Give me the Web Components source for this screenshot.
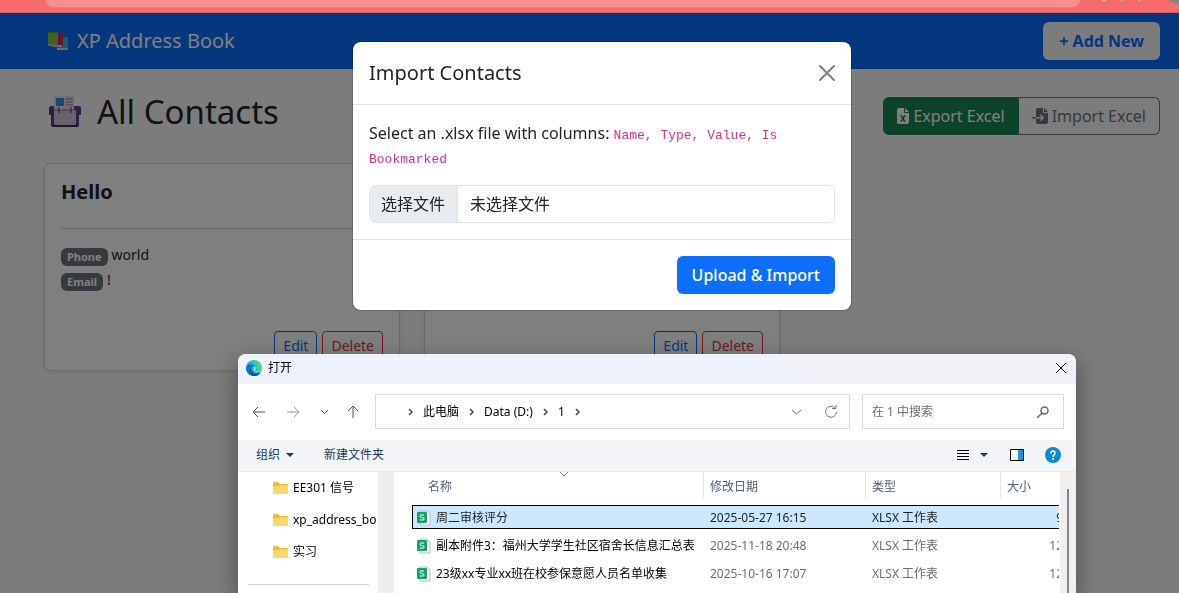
<!DOCTYPE html>
<html lang="en">
<head>
<meta charset="UTF-8">
<meta name="viewport" content="width=device-width, initial-scale=1">
<title>XP Address Book</title>
<style>
    html, body {
        height: 100%;
        margin: 0;
    }

    body {
        background: #f8f9fa;
        color: #212529;
        font: 16px/24px "Noto Sans", "Noto Sans CJK SC", sans-serif;
        overflow: hidden;
    }

    main {
        padding: 24px 19px 24px 44px;
    }

    .cards {
        display: grid;
        grid-template-columns: repeat(3, 1fr);
        gap: 24px;
    }
</style>
</head>
<body>
    <browser-bar></browser-bar>
    <app-navbar>XP Address Book</app-navbar>
    <main>
        <page-header>All Contacts</page-header>
        <div class="cards">
            <contact-card>
                <span slot="name">Hello</span>
                <contact-field label="Phone">world</contact-field>
                <contact-field label="Email">!</contact-field>
            </contact-card>
            <contact-card></contact-card>
        </div>
    </main>
    <import-modal>
        <span slot="title">Import Contacts</span>
    </import-modal>
    <file-dialog></file-dialog>

<script>
// Attach an open shadow root filled with the given markup
class BaseElement extends HTMLElement {
    constructor() {
        super();
        const template = document.createElement('template');
        template.innerHTML = this.constructor.markup;
        this.attachShadow({ mode: 'open' });
        this.shadowRoot.appendChild(template.content.cloneNode(true));
    }
}

class BrowserBar extends BaseElement {
    static markup = `
        <style>
            :host {
                display: flex;
                box-sizing: border-box;
                height: 13px;
                padding-left: 46px;
                background: #f66c6c;
                border-bottom: 1px solid #d95f62;
                position: relative;
                z-index: 2;
                overflow: hidden;
            }
            .address {
                flex: 1;
                height: 7px;
                background: #f99090;
                border-bottom: 1px solid #d98080;
                border-radius: 0 0 16px 16px;
            }
            svg { flex: none; }
        </style>
        <div class="address"></div>
        <svg width="99" height="12" viewBox="0 0 99 12">
            <path d="M22 0h4M41 0h2M58 0h2" stroke="#fff"/>
            <circle cx="97" cy="-5" r="9" fill="#8a8580"/>
        </svg>
    `;
}
customElements.define('browser-bar', BrowserBar);

class AppNavbar extends BaseElement {
    static markup = `
        <style>
            :host {
                display: block;
                background: #0d6efd;
            }
            nav {
                display: flex;
                align-items: center;
                justify-content: space-between;
                height: 56px;
                padding: 0 19px 0 47px;
            }
            a {
                display: flex;
                align-items: center;
                gap: 8px;
                color: #fff;
                font-size: 20px;
                text-decoration: none;
            }
            button {
                height: 38px;
                padding: 0 16px;
                border: 0;
                border-radius: 6px;
                background: #f8f9fa;
                color: #0d6efd;
                font: inherit;
                font-weight: 700;
            }
        </style>
        <nav>
            <a href="#">
                <svg width="22" height="20" viewBox="0 0 22 20" aria-hidden="true">
                    <path d="M10 6h11v12H10z" fill="#39b9e3"/>
                    <path d="M10 17h11v2H10z" fill="#c3dfed"/>
                    <path d="M6 3h10v12H6z" fill="#d5294d"/>
                    <path d="M5 14h10v2H5z" fill="#e6c6d3"/>
                    <path d="M1 1h10v13H1z" fill="#80c342"/>
                    <path d="M1 1h10v1H1z" fill="#5f9c30"/>
                    <path d="M1 13h10v2H1z" fill="#9fc98a"/>
                </svg>
                <slot></slot>
            </a>
            <button type="button">+ Add New</button>
        </nav>
    `;
}
customElements.define('app-navbar', AppNavbar);

class PageHeader extends BaseElement {
    static markup = `
        <style>
            :host {
                display: flex;
                align-items: center;
                justify-content: space-between;
                height: 46px;
                margin-bottom: 24px;
            }
            h1 {
                display: flex;
                align-items: center;
                gap: 15px;
                margin: 0 0 8px;
                padding-left: 4px;
                font-size: 33px;
                font-weight: 400;
                line-height: 38px;
            }
            .group { display: flex; }
            button {
                display: flex;
                align-items: center;
                gap: 4px;
                height: 38px;
                padding: 0 13px;
                border: 1px solid #198754;
                border-radius: 6px 0 0 6px;
                background: #198754;
                color: #fff;
                font: inherit;
            }
            button + button {
                border-color: #6c757d;
                border-left: 0;
                border-radius: 0 6px 6px 0;
                background: none;
                color: #6c757d;
            }
        </style>
        <h1>
            <svg width="34" height="34" viewBox="0 0 34 34" aria-hidden="true">
                <path d="M1 13q0-2 2-2h28q2 0 2 2v7h-2v10q0 2-2 2H5q-2 0-2-2V20H1z" fill="#5b418f"/>
                <path d="M6 1h20v14H6z" fill="#e4dcea"/>
                <path d="M8 3h8v8H8z" fill="#3a8fd9"/>
                <path d="M18 4h7M18 7h7M18 10h7" stroke="#a89bad" stroke-width="1.5"/>
                <path d="M6 15h22v14q0 1-1 1H7q-1 0-1-1z" fill="#d3c4db"/>
                <path d="M6 15h22" stroke="#80699c"/>
                <path d="M11 12v6M23 12v6" stroke="#3c2b5c"/>
                <path d="M4 31h26" stroke="#3f2969" stroke-width="2"/>
            </svg>
            <slot></slot>
        </h1>
        <div class="group">
            <button type="button">
                <svg width="12" height="16" viewBox="0 0 384 512" fill="currentColor" aria-hidden="true">
                    <path fill-rule="evenodd" d="M64 0C29 0 0 29 0 64v384c0 35 29 64 64 64h256c35 0 64-29 64-64V160H256c-18 0-32-14-32-32V0zM256 0v128h128zM155 234l37 57 37-57c7-11 22-14 33-7s14 22 7 33l-49 76 49 76c7 11 4 26-7 33s-26 4-33-7l-37-58-37 58c-7 11-22 14-33 7s-14-22-7-33l49-76-49-76c-7-11-4-26 7-33s26-4 33 7z"/>
                </svg>
                Export Excel
            </button>
            <button type="button">
                <svg width="16" height="16" viewBox="0 0 512 512" fill="currentColor" aria-hidden="true">
                    <path fill-rule="evenodd" d="M128 64c0-35 29-64 64-64h160v128c0 18 14 32 32 32h128v288c0 35-29 64-64 64H192c-35 0-64-29-64-64V336h174l-39 39c-9 9-9 25 0 34s25 9 34 0l80-80c9-9 9-25 0-34l-80-80c-9-9-25-9-34 0s-9 25 0 34l39 39H128zM0 312c0-13 11-24 24-24h104v48H24c-13 0-24-11-24-24zM512 128H384V0z"/>
                </svg>
                Import Excel
            </button>
        </div>
    `;
}
customElements.define('page-header', PageHeader);

class ContactField extends BaseElement {
    static markup = `
        <style>
            :host {
                display: flex;
                align-items: center;
                gap: 4px;
                height: 25px;
                font-size: 14px;
            }
            b {
                padding: 0 6px;
                margin-top: 4px;
                border-radius: 6px;
                background: #6c757d;
                color: #fff;
                font-size: 11px;
                line-height: 18px;
            }
        </style>
        <b></b>
        <slot></slot>
    `;

    connectedCallback() {
        this.shadowRoot.querySelector('b').textContent = this.getAttribute('label');
    }
}
customElements.define('contact-field', ContactField);

class ContactCard extends BaseElement {
    static markup = `
        <style>
            :host {
                display: flex;
                flex-direction: column;
                box-sizing: border-box;
                min-height: 208px;
                padding: 16px 16px 8px;
                border: 1px solid #d5d6d7;
                border-radius: 6px;
                background: #fff;
                box-shadow: 0 2px 4px rgba(0, 0, 0, .08);
            }
            h2 {
                min-height: 24px;
                margin: 0;
                font-size: 20px;
                font-weight: 700;
            }
            hr {
                width: 100%;
                margin: 24px 0 13px;
                border: 0;
                border-top: 1px solid #c8c9ca;
            }
            .fields { flex: 1; }
            footer {
                display: flex;
                justify-content: flex-end;
                gap: 5px;
            }
            button {
                height: 31px;
                padding: 0 8px 2px;
                border: 1px solid #0d6efd;
                border-radius: 4px;
                background: none;
                color: #0d6efd;
                font: inherit;
                font-size: 14px;
            }
            .delete {
                border-color: #dc3545;
                color: #dc3545;
            }
        </style>
        <h2><slot name="name"></slot></h2>
        <hr>
        <div class="fields"><slot></slot></div>
        <footer>
            <button type="button">Edit</button>
            <button type="button" class="delete">Delete</button>
        </footer>
    `;
}
customElements.define('contact-card', ContactCard);

class ImportModal extends BaseElement {
    static markup = `
        <style>
            :host {
                display: flex;
                justify-content: center;
                align-items: flex-start;
                box-sizing: border-box;
                position: fixed;
                inset: 13px 0 0;
                padding: 29px 0 0 25px;
                background: rgba(0, 0, 0, .5);
            }
            section {
                box-sizing: border-box;
                width: 498px;
                border-radius: 8px;
                background: #fff;
                box-shadow: 0 0 0 1px rgba(0, 0, 0, .18);
            }
            header {
                display: flex;
                align-items: center;
                justify-content: space-between;
                padding: 16px;
                border-bottom: 1px solid #dee2e6;
            }
            h2 {
                margin: 0;
                font-size: 20px;
                font-weight: 400;
                line-height: 30px;
            }
            .close {
                display: flex;
                padding: 0;
                border: 0;
                background: none;
                color: #7f7f7f;
            }
            .body { padding: 16px; }
            p { margin: 0 0 16px; }
            code {
                color: #d63384;
                font: 13px "Liberation Mono", monospace;
            }
            .file {
                display: flex;
                height: 36px;
                border: 1px solid #dee2e6;
                border-radius: 6px;
                line-height: 36px;
                overflow: hidden;
            }
            .file span { padding: 0 12px; }
            .file .pick {
                padding-left: 11px;
                border-right: 1px solid #dee2e6;
                background: #e9ecef;
            }
            .file input {
                width: 0;
                height: 0;
                padding: 0;
                opacity: 0;
            }
            footer {
                display: flex;
                justify-content: flex-end;
                padding: 16px;
                border-top: 1px solid #dee2e6;
            }
            .upload {
                height: 38px;
                padding: 0 15px;
                border: 0;
                border-radius: 6px;
                background: #0d6efd;
                color: #fff;
                font: inherit;
                font-weight: 500;
            }
        </style>
        <section role="dialog" aria-labelledby="title">
            <header>
                <h2 id="title"><slot name="title"></slot></h2>
                <button type="button" class="close" aria-label="Close">
                    <svg width="16" height="16" viewBox="0 0 16 16" fill="none" stroke="currentColor" stroke-width="2" stroke-linecap="round">
                        <path d="M1 1l14 14M15 1L1 15"/>
                    </svg>
                </button>
            </header>
            <div class="body">
                <p>Select an .xlsx file with columns: <code>Name, Type, Value, Is Bookmarked</code></p>
                <label class="file" for="file">
                    <span class="pick">选择文件</span>
                    <span>未选择文件</span>
                    <input id="file" type="file" accept=".xlsx">
                </label>
            </div>
            <footer>
                <button type="button" class="upload">Upload &amp; Import</button>
            </footer>
        </section>
    `;
}
customElements.define('import-modal', ImportModal);

const folderIcon = `
    <svg width="15" height="12" viewBox="0 0 15 12" aria-hidden="true">
        <path d="M0 1q0-1 1-1h4l2 2h7q1 0 1 1v3H0z" fill="#f5b72f"/>
        <path d="M0 5q0-1 1-1h5l1-1h7q1 0 1 1v7q0 1-1 1H1q-1 0-1-1z" fill="#ffd667"/>
    </svg>`;

const sheetIcon = `
    <svg width="14" height="16" viewBox="0 0 14 16" aria-hidden="true">
        <path d="M3 1h7l3 3v11H3z" fill="#fff" stroke="#b5b8bb"/>
        <rect y="2" width="10" height="11" rx="1" fill="#12a365"/>
        <path d="M7 5H4q-1 0-1 1t1 1.500h2q1 .5 1 1.500t-1 1H3" fill="none" stroke="#fff"/>
    </svg>`;

const crumbArrow = `
    <svg width="5" height="8" viewBox="0 0 5 8" fill="none" stroke="#444" stroke-width="1.500" aria-hidden="true">
        <path d="M1 1l3 3-3 3"/>
    </svg>`;

const fileRow = (name, date, size, selected = '') => `
    <tr class="${selected}">
        <td class="name"><div>${sheetIcon}${name}</div></td>
        <td class="date">${date}</td>
        <td>XLSX 工作表</td>
        <td class="size">${size}</td>
    </tr>`;

class FileDialog extends BaseElement {
    static markup = `
        <style>
            :host {
                display: flex;
                flex-direction: column;
                position: fixed;
                inset: 354px 103px 0 238px;
                border-radius: 8px 8px 0 0;
                background: #fff;
                color: #000;
                font-size: 12px;
                line-height: 16px;
                box-shadow: 0 8px 24px rgba(0, 0, 0, .4);
                overflow: hidden;
            }
            button {
                display: flex;
                align-items: center;
                justify-content: center;
                padding: 0;
                border: 0;
                background: none;
                color: inherit;
                font: inherit;
            }
            svg { flex: none; }
            .title {
                display: flex;
                align-items: center;
                gap: 6px;
                height: 28px;
                padding: 0 10px 2px 8px;
                background: linear-gradient(90deg, #eef2fb, #f1f2f7);
            }
            .title button { margin-left: auto; }
            .nav {
                display: flex;
                align-items: center;
                gap: 12px;
                height: 55px;
                padding: 0 12px 1px 14px;
                color: #666;
            }
            .history {
                display: flex;
                gap: 18px;
            }
            .address, .search {
                display: flex;
                align-items: center;
                box-sizing: border-box;
                height: 35px;
                border: 1px solid #d9d9d9;
            }
            .address {
                flex: 1;
                gap: 10px;
                padding: 0 12px 0 32px;
                margin-left: 4px;
                color: #000;
            }
            .address .tools {
                display: flex;
                align-items: center;
                gap: 24px;
                margin-left: auto;
            }
            .search {
                width: 202px;
                padding: 0 14px 0 9px;
            }
            .search input {
                flex: 1;
                min-width: 0;
                padding: 0;
                border: 0;
                outline: 0;
                background: none;
                font: inherit;
            }
            .search input::placeholder { color: #6d6d6d; }
            .toolbar {
                display: flex;
                align-items: center;
                height: 30px;
                padding: 0 15px 1px 18px;
                border-bottom: 1px solid #e8e9eb;
                background: #f4f5f8;
                color: #1e395b;
            }
            .toolbar button { gap: 6px; }
            .organize { margin-right: 30px; }
            .toolbar .views {
                gap: 11px;
                margin-left: auto;
                margin-right: 22px;
            }
            .preview { margin-right: 21px; }
            .panes {
                display: flex;
                flex: 1;
                min-height: 0;
            }
            aside {
                width: 140px;
                overflow: hidden;
            }
            aside a {
                display: flex;
                align-items: center;
                gap: 5px;
                height: 32px;
                padding-left: 35px;
                color: #000;
                text-decoration: none;
                white-space: nowrap;
            }
            aside hr {
                margin: 16px 9px 0 10px;
                border: 0;
                border-top: 1px solid #d0d0d0;
            }
            .gutter {
                width: 16px;
                background: #eee;
            }
            .list {
                flex: 1;
                min-width: 0;
                position: relative;
                padding-left: 18px;
                overflow: hidden;
            }
            .sort {
                position: absolute;
                top: 0;
                left: 25%;
            }
            table {
                width: calc(100% + 4px);
                margin-top: -4px;
                border-spacing: 0 4px;
                table-layout: fixed;
            }
            th {
                box-sizing: border-box;
                height: 29px;
                padding: 0 0 0 7px;
                background: linear-gradient(#e5e5e5, #e5e5e5) 0 0 / 1px 27px no-repeat;
                color: #4c607a;
                font-weight: 400;
                text-align: left;
            }
            th:first-child {
                padding-left: 16px;
                background: none;
            }
            .c-date { width: 162px; }
            .c-type { width: 135px; }
            .c-size { width: 63px; }
            td {
                height: 20px;
                padding: 2px 0 0 7px;
                border: solid transparent;
                border-width: 1px 0;
                color: #6d6d6d;
                white-space: nowrap;
            }
            td.name {
                padding-left: 4px;
                border-left-width: 1px;
                color: #000;
            }
            td.name div {
                display: flex;
                align-items: center;
                gap: 5px;
            }
            td.size {
                padding-left: 0;
                text-align: right;
            }
            .selected td {
                border-color: #000;
                background: #cce8ff;
                color: #222;
            }
            .scroll {
                box-sizing: border-box;
                width: 16px;
                margin-left: 1px;
                padding: 17px 6px 0 7px;
                background: #f0f0f0;
            }
            .thumb {
                height: 100%;
                margin-right: 1px;
                background: #858585;
            }
        </style>
        <div class="title">
            <svg width="16" height="16" viewBox="0 0 16 16" aria-hidden="true">
                <defs>
                    <linearGradient id="sea" x1="0" x2="1" y1="0.500" y2="0">
                        <stop offset="0" stop-color="#1aa5dc"/>
                        <stop offset="0.500" stop-color="#2cc3c8"/>
                        <stop offset="1" stop-color="#6fdc55"/>
                    </linearGradient>
                </defs>
                <circle cx="8" cy="8" r="8" fill="url(#sea)"/>
                <path d="M0 8c0-4 6-5 9-2-3 0-4 2-3 4 1 3 5 4 8 2-2 3-4 4-6 4-5 0-8-4-8-8z" fill="#0c76cf"/>
                <path d="M5 8c-1 5 3 7 7 6 1 0 2-1 3-2-2 4-5 4-7 4-4-1-5-5-3-8z" fill="#0b4f9e"/>
                <path d="M9 7c1 1 0 2 0 3 0 2 4 2 6 1-3 2-7 1-7-2 0-1 0-2 1-2z" fill="#fff"/>
            </svg>
            打开
            <button type="button" aria-label="关闭">
                <svg width="10" height="10" viewBox="0 0 10 10" stroke="#111"><path d="M0 0l10 10M10 0L0 10"/></svg>
            </button>
        </div>
        <div class="nav">
            <div class="history">
                <button type="button" aria-label="后退">
                    <svg width="14" height="12" viewBox="0 0 14 12" fill="none" stroke="#555"><path d="M13 6H1M6 1L1 6l5 5"/></svg>
                </button>
                <button type="button" aria-label="前进">
                    <svg width="18" height="12" viewBox="-3 0 18 12" fill="none" stroke="#999"><path d="M0 6h12M7 1l5 5-5 5"/></svg>
                </button>
                <button type="button" aria-label="最近">
                    <svg width="9" height="6" viewBox="0 0 9 6" fill="none" stroke="#555"><path d="M1 1l3.500 3.500L8 1"/></svg>
                </button>
                <button type="button" aria-label="上移">
                    <svg width="12" height="14" viewBox="0 0 12 14" fill="none" stroke="#555"><path d="M6 13V1M1 6l5-5 5 5"/></svg>
                </button>
            </div>
            <div class="address">
                ${crumbArrow}<span>此电脑</span>
                ${crumbArrow}<span>Data (D:)</span>
                ${crumbArrow}<span>1</span>
                ${crumbArrow}
                <div class="tools">
                    <button type="button" aria-label="展开">
                        <svg width="9" height="6" viewBox="0 0 9 6" fill="none" stroke="#777"><path d="M0 1l4.500 4L9 1"/></svg>
                    </button>
                    <button type="button" aria-label="刷新">
                        <svg width="12" height="13" viewBox="0 0 12 13" fill="none" stroke="#777"><path d="M10 3a5.500 5.500 0 1 0 1.500 4M7 3.500h4V0"/></svg>
                    </button>
                </div>
            </div>
            <div class="search">
                <input type="search" aria-label="搜索" placeholder="在 1 中搜索">
                <svg width="12" height="12" viewBox="0 0 12 12" fill="none" stroke="#666" stroke-width="1.500" aria-hidden="true">
                    <circle cx="7.500" cy="4.500" r="3.500"/><path d="M5 7l-5 5"/>
                </svg>
            </div>
        </div>
        <div class="toolbar">
            <button type="button" class="organize">
                组织
                <svg width="8" height="4" viewBox="0 0 8 4" fill="#1e395b"><path d="M0 0h8L4 4z"/></svg>
            </button>
            <button type="button">新建文件夹</button>
            <button type="button" class="views" aria-label="视图">
                <svg width="12" height="10" viewBox="0 0 12 10" stroke="#000"><path d="M0 .5h12M0 3.500h12M0 6.500h12M0 9.500h12"/></svg>
                <svg width="8" height="4" viewBox="0 0 8 4" fill="#1e395b"><path d="M0 0h8L4 4z"/></svg>
            </button>
            <button type="button" class="preview" aria-label="预览窗格">
                <svg width="14" height="12" viewBox="0 0 14 12">
                    <path d="M.5 .5h13v11H.5z" fill="#fff" stroke="#000"/><path d="M8 1h5v10H8z" fill="#149ae0"/>
                </svg>
            </button>
            <button type="button" aria-label="帮助">
                <svg width="16" height="16" viewBox="0 0 16 16" fill="none">
                    <circle cx="8" cy="8" r="8" fill="#0f87d8"/>
                    <path d="M6 6.500Q6 4 8 4t2 2q0 1-1 2T8 10" stroke="#fff" stroke-width="1.500"/>
                    <circle cx="8" cy="12" r="1" fill="#fff"/>
                </svg>
            </button>
        </div>
        <div class="panes">
            <aside>
                <a href="#">${folderIcon}EE301 信号</a>
                <a href="#">${folderIcon}xp_address_bo</a>
                <a href="#">${folderIcon}实习</a>
                <hr>
            </aside>
            <div class="gutter"></div>
            <div class="list">
                <svg class="sort" width="8" height="5" viewBox="0 0 8 5" fill="none" stroke="#777"><path d="M0 0l4 4 4-4"/></svg>
                <table>
                    <thead>
                        <tr>
                            <th>名称</th>
                            <th class="c-date">修改日期</th>
                            <th class="c-type">类型</th>
                            <th class="c-size">大小</th>
                        </tr>
                    </thead>
                    <tbody>
                        ${fileRow('周二审核评分', '2025-05-27 16:15', '9', 'selected')}
                        ${fileRow('副本附件3：福州大学学生社区宿舍长信息汇总表', '2025-11-18 20:48', '12')}
                        ${fileRow('23级xx专业xx班在校参保意愿人员名单收集', '2025-10-16 17:07', '12')}
                    </tbody>
                </table>
            </div>
            <div class="scroll"><div class="thumb"></div></div>
        </div>
    `;
}
customElements.define('file-dialog', FileDialog);
</script>
</body>
</html>
